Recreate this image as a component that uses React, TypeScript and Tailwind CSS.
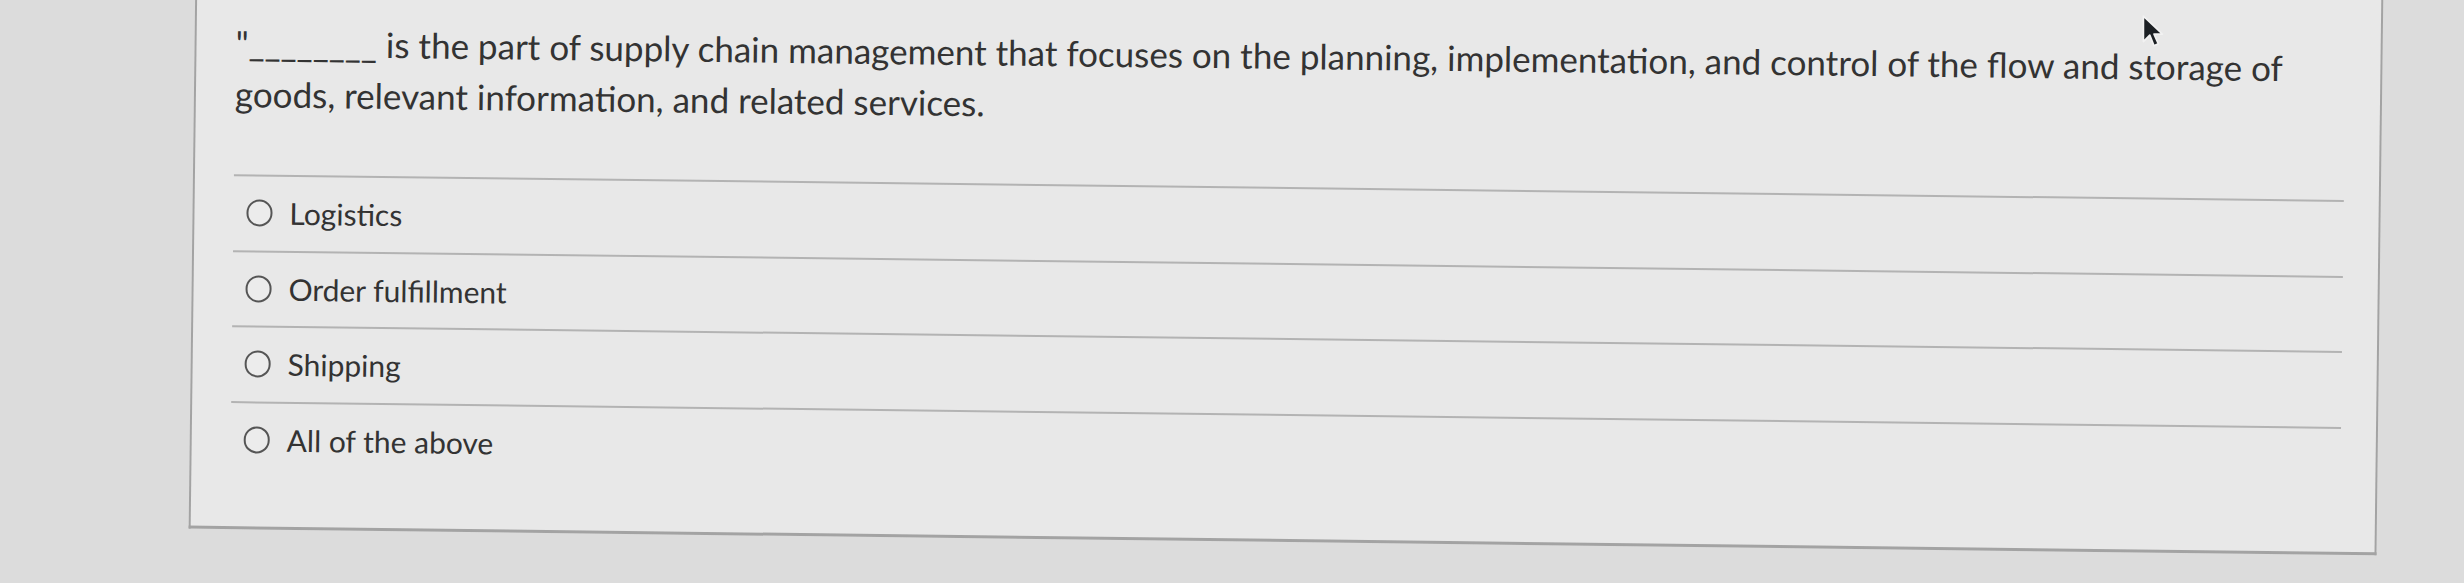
const options = ["Logistics", "Order fulfillment", "Shipping", "All of the above"];

function Cursor() {
  return (
    <svg
      className="absolute left-[2140px] top-[14px]"
      width="28"
      height="36"
      viewBox="0 0 26 34"
      aria-hidden="true"
    >
      <path
        d="M3 2 L3 26 L9 20 L13 30 L17 28 L13 19 L21 19 Z"
        fill="#1c2024"
        stroke="#f2f2f2"
        strokeWidth="1.6"
        strokeLinejoin="round"
      />
    </svg>
  );
}

export default function App() {
  return (
    <div
      className="relative h-[583px] w-[2464px] overflow-hidden bg-[#dcdcdc]"
      style={{ fontFamily: "Lato, 'Open Sans', sans-serif" }}
    >
      <div className="ml-[192px] mt-[-22px] h-[564px] w-[2188px] rotate-[0.7deg] border-x-2 border-b-[3px] border-[#a3a3a3] bg-[#e8e8e8] pl-[39px] pr-[35px] pt-[52px] text-[#333333]">
        <p className="text-[35px] leading-[51px]">
          "________ is the part of supply chain management that focuses on the planning,
          implementation, and control of the flow and storage of goods, relevant information, and
          related services.
        </p>

        <div className="mt-[55px] border-t-2 border-[#b3b3b3]">
          {options.map((label) => (
            <label
              key={label}
              className="flex h-[75.5px] items-start border-b-2 border-[#b3b3b3] pl-[13px] pt-[21px] last:border-b-0"
            >
              <span className="mt-[2px] h-[27px] w-[26px] shrink-0 rounded-full border-2 border-[#555555] bg-[#ececec]" />
              <span className="ml-[17px] text-[30px] leading-[30px]">{label}</span>
            </label>
          ))}
        </div>
      </div>
      <Cursor />
    </div>
  );
}
